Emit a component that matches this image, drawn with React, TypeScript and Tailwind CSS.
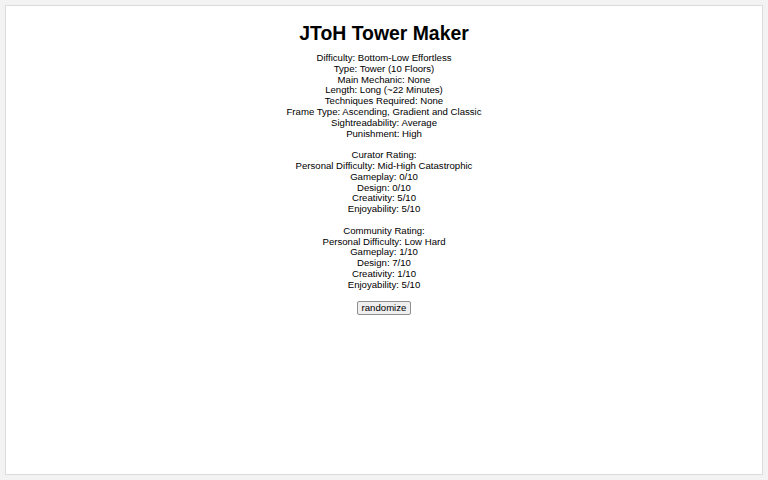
export default function App() {
  const info = [
    "Difficulty: Bottom-Low Effortless",
    "Type: Tower (10 Floors)",
    "Main Mechanic: None",
    "Length: Long (~22 Minutes)",
    "Techniques Required: None",
    "Frame Type: Ascending, Gradient and Classic",
    "Sightreadability: Average",
    "Punishment: High",
  ];
  const curator = [
    "Curator Rating:",
    "Personal Difficulty: Mid-High Catastrophic",
    "Gameplay: 0/10",
    "Design: 0/10",
    "Creativity: 5/10",
    "Enjoyability: 5/10",
  ];
  const community = [
    "Community Rating:",
    "Personal Difficulty: Low Hard",
    "Gameplay: 1/10",
    "Design: 7/10",
    "Creativity: 1/10",
    "Enjoyability: 5/10",
  ];
  const block = (lines: string[]) => (
    <div className="flex flex-col items-center">
      {lines.map((l) => (
        <div key={l}>{l}</div>
      ))}
    </div>
  );
  return (
    <div
      className="h-[480px] w-[768px] bg-[#f3f3f3] p-[5px]"
      style={{ fontFamily: '"Liberation Sans", Arial, sans-serif' }}
    >
      <div className="flex h-[470px] flex-col items-center border border-[#dcdcdc] bg-white pt-[15px] text-black">
        <h1 className="text-[19.4px] font-bold leading-[24px]">JToH Tower Maker</h1>
        <div className="mt-[8px] flex flex-col items-center gap-[10.8px] text-[9.6px] leading-[10.8px]">
          {block(info)}
          {block(curator)}
          {block(community)}
        </div>
        <button className="mt-[10.5px] h-[14px] rounded-[2px] border border-[#8f8f8f] bg-[#efefef] px-[4px] text-[9.6px] leading-[12px] text-black">
          randomize
        </button>
      </div>
    </div>
  );
}
